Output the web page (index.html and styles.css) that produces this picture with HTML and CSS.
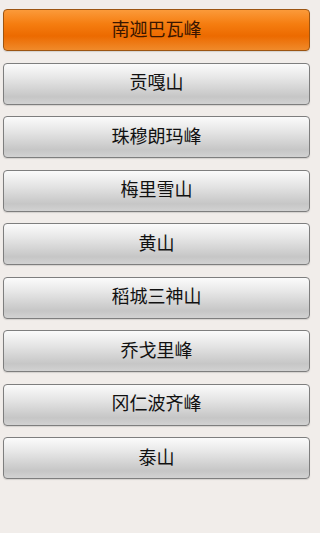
FILE: index.html
```html
<!DOCTYPE html>
<html>
<head>
<meta charset="utf-8">
<title>名山</title>
<link rel="stylesheet" href="styles.css">
</head>
<body>
<div class="list">
<div class="item active">南迦巴瓦峰</div>
<div class="item">贡嘎山</div>
<div class="item">珠穆朗玛峰</div>
<div class="item">梅里雪山</div>
<div class="item">黄山</div>
<div class="item">稻城三神山</div>
<div class="item">乔戈里峰</div>
<div class="item">冈仁波齐峰</div>
<div class="item">泰山</div>
</div>
</body>
</html>
```

FILE: styles.css
```css
html, body { height: 100%; }
body { margin: 0; background-color: #f1edea; font-family: "Noto Sans CJK SC", "Noto Sans", sans-serif; overflow: hidden; }
.list { display: flex; flex-direction: column; gap: 11.5px; padding: 9px 10px 0 3px; }
.item { height: 42px; box-sizing: border-box; padding-bottom: 5px; border: 1px solid #7e7e7e; border-radius: 4px; display: flex; align-items: center; justify-content: center; font-size: 18px; color: #111; background: linear-gradient(to bottom, #fbfbfb 0%, #e6e6e6 35%, #c6c6c6 82%, #d2d2d2 100%); box-shadow: 0 1px 1px rgba(0,0,0,0.12); }
.item.active { border-color: #9c5512; color: #3a1600; background: linear-gradient(to bottom, #fb9a3a 0%, #f57d10 35%, #ec6a00 65%, #f08a2a 100%); }
```
